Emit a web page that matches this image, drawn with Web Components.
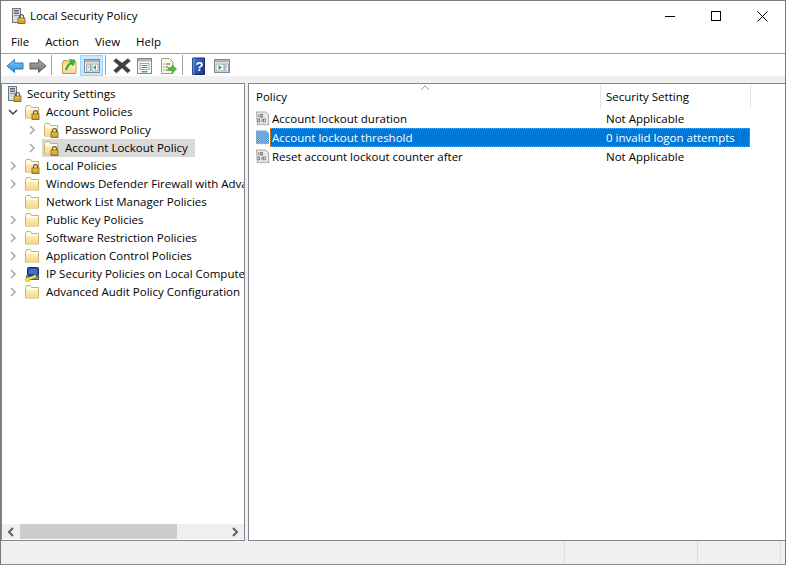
<!DOCTYPE html>
<html><head><meta charset="utf-8"><title>Local Security Policy</title>
<style>
html,body{margin:0;padding:0;height:100%;background:#f0f0f0;overflow:hidden}
body{font:11.5px/16px "Open Sans","Noto Sans",sans-serif;color:#000}
</style></head><body>
<lsp-window>
  <lsp-titlebar slot="title">Local Security Policy</lsp-titlebar>
  <lsp-menubar slot="menu"><lsp-menu>File</lsp-menu><lsp-menu>Action</lsp-menu><lsp-menu>View</lsp-menu><lsp-menu>Help</lsp-menu></lsp-menubar>
  <lsp-toolbar slot="tools"></lsp-toolbar>
  <lsp-tree slot="left">
    <lsp-tree-item level="0" icon="server">Security Settings</lsp-tree-item>
    <lsp-tree-item level="1" icon="lockfolder" chevron="open">Account Policies</lsp-tree-item>
    <lsp-tree-item level="2" icon="lockfolder" chevron="closed">Password Policy</lsp-tree-item>
    <lsp-tree-item level="2" icon="lockfolder" chevron="closed" selected>Account Lockout Policy</lsp-tree-item>
    <lsp-tree-item level="1" icon="lockfolder" chevron="closed">Local Policies</lsp-tree-item>
    <lsp-tree-item level="1" icon="folder" chevron="closed">Windows Defender Firewall with Advanced Security</lsp-tree-item>
    <lsp-tree-item level="1" icon="folder">Network List Manager Policies</lsp-tree-item>
    <lsp-tree-item level="1" icon="folder" chevron="closed">Public Key Policies</lsp-tree-item>
    <lsp-tree-item level="1" icon="folder" chevron="closed">Software Restriction Policies</lsp-tree-item>
    <lsp-tree-item level="1" icon="folder" chevron="closed">Application Control Policies</lsp-tree-item>
    <lsp-tree-item level="1" icon="ipsec" chevron="closed">IP Security Policies on Local Computer</lsp-tree-item>
    <lsp-tree-item level="1" icon="folder" chevron="closed">Advanced Audit Policy Configuration</lsp-tree-item>
  </lsp-tree>
  <lsp-list slot="right">
    <lsp-row setting="Not Applicable">Account lockout duration</lsp-row>
    <lsp-row setting="0 invalid logon attempts" selected>Account lockout threshold</lsp-row>
    <lsp-row setting="Not Applicable">Reset account lockout counter after</lsp-row>
  </lsp-list>
  <lsp-statusbar slot="status"></lsp-statusbar>
</lsp-window>
<script>
const defs=`<defs>
<linearGradient id="fy" x1="0" y1="0" x2="0" y2="1"><stop offset="0" stop-color="#fdeeb8"/><stop offset="1" stop-color="#f5d98e"/></linearGradient>
<linearGradient id="lk" x1="0" y1="0" x2="0" y2="1"><stop offset="0" stop-color="#ecc850"/><stop offset="1" stop-color="#c9951f"/></linearGradient>
<linearGradient id="bl" x1="0" y1="0" x2="0" y2="1"><stop offset="0" stop-color="#8ed2f8"/><stop offset="1" stop-color="#1a86dc"/></linearGradient>
<linearGradient id="gy" x1="0" y1="0" x2="0" y2="1"><stop offset="0" stop-color="#b0b0b0"/><stop offset="1" stop-color="#6e6e6e"/></linearGradient>
<linearGradient id="hb" x1="0" y1="0" x2="1" y2="1"><stop offset="0" stop-color="#4a78d4"/><stop offset="1" stop-color="#16308c"/></linearGradient>
<pattern id="chk" width="2" height="2" patternUnits="userSpaceOnUse"><rect width="2" height="2" fill="#0a6fc8"/><rect width="1" height="1" fill="#cfe3f5"/><rect x="1" y="1" width="1" height="1" fill="#cfe3f5"/></pattern>
</defs>`;
const folder=`<path d="M1.500 3.500v10.500h13V3.500H7.500L6.500 1.500H2.500z" fill="#fffbe6" stroke="#cdb06a"/><rect x="2" y="5.500" width="12" height="8" fill="url(#fy)"/><path d="M2 5h12" stroke="#fff"/>`;
const lock=`<path d="M9.500 10V8.600a2 2 0 0 1 4 0V10" fill="none" stroke="#6b5a2c" stroke-width="1.200"/><rect x="8" y="10" width="7" height="5.500" fill="url(#lk)" stroke="#7c5e14" stroke-width=".8"/>`;
const win=`<rect x="1.500" y="2.500" width="15" height="13" fill="#fff" stroke="#7d8a94"/><rect x="2" y="3" width="14" height="2.500" fill="#a9b5be"/>`;
const digit=(x,y)=>`<rect x="${x}" y="${y}" width="2" height="3" fill="none" stroke="#6d6d6d" stroke-width=".8"/>`;
const one=(x,y)=>`<path d="M${x} ${y}v3" stroke="#6d6d6d" stroke-width="1"/>`;
const I={
folder:[16,folder],
lockfolder:[16,folder+lock],
server:[16,`<rect x="2.500" y=".5" width="8" height="14" fill="#d8dde2" stroke="#6e7680"/><rect x="4" y="2" width="5" height="1.400" fill="#59636e"/><rect x="4" y="4.500" width="5" height="1.400" fill="#59636e"/><rect x="4" y="7" width="5" height="1" fill="#8b95a0"/>`+lock],
ipsec:[16,`<rect x="3.500" y="1.500" width="11" height="8" rx="1" fill="#2c4f9c" stroke="#1c2a50"/><rect x="5" y="3" width="8" height="5" fill="#3f6fc8"/><rect x="2.500" y="10" width="12" height="3.500" fill="#8a8f98" stroke="#33363c" stroke-width=".8"/><path d="M3 14 12 9.500" stroke="#f6e63c" stroke-width="2"/><circle cx="3.500" cy="13.500" r="2.200" fill="#f6e63c" stroke="#8c8420" stroke-width=".5"/>`],
policy:[14,`<path d="M.5 .5h10l3 3v11l-2-1-2 1-2-1-2 1-2-1-2 1z" fill="#e6e6e6" stroke="#a3a3a3"/>`+one(3,3)+digit(5,3)+digit(2,8)+one(6.500,8)+digit(8,8)],
policySel:[14,`<path d="M0 0h11l3 3v12l-2-1-2 1-2-1-2 1-2-1-2 1-2-1z" fill="url(#chk)"/>`],
back:[18,`<path d="M1 9 8.500 2.500V6H17v6H8.500v3.500z" fill="url(#bl)" stroke="#2a78b8"/>`],
forward:[18,`<path d="M17 9 9.500 2.500V6H1v6h8.500v3.500z" fill="url(#gy)" stroke="#5e5e5e"/>`],
up:[18,`<path d="M2.500 5.500v11h13.500V5H8.500L7.500 3.500H3.500z" fill="#f7d98a" stroke="#bd9a4c"/><path d="M3 8h12.500v8H3z" fill="url(#fy)"/><path d="M6 13C7 9 9 7 11.500 6" fill="none" stroke="#38a838" stroke-width="2.200"/><path d="M9 2.500 15 3l-2 6z" fill="#3fb83f" stroke="#218a21" stroke-width=".5"/>`],
showhide:[18,win+`<rect x="3.500" y="7" width="4" height="7" fill="#fff" stroke="#93a0aa"/><path d="M4.500 9h2M4.500 11h2" stroke="#93a0aa"/><rect x="9" y="7" width="6" height="7" fill="#fff" stroke="#93a0aa"/><path d="M13 8v5l-3-2.500z" fill="#2fa84a"/>`],
del:[18,`<path d="M3 1.500 9 6l6-4.500 2.500 2.500L12 8.500l5.500 5-3 2.500L9 11l-5.500 5-3-2.500L6 8.500.500 4z" fill="#3e3e3e" stroke="#777" stroke-width=".6"/>`],
props:[18,`<rect x="1.500" y="1.500" width="14" height="15" fill="#f6f8fa" stroke="#7d8a94"/><rect x="2" y="2" width="13" height="2.500" fill="#aab5bd"/><rect x="4" y="6.500" width="9" height="6" fill="#fff" stroke="#9aa6ae"/><path d="M5.500 8.500h6M5.500 10.500h6" stroke="#6a7680"/><rect x="5.500" y="14" width="6" height="1.500" fill="#2aa3e0"/>`],
exportx:[18,`<path d="M2.500 1.500h8l3.500 3.500v11.500H2.500z" fill="#fdf7df" stroke="#a6a084"/><path d="M4.500 7h1M7 7h4M4.500 10h1M7 10h2M4.500 13h1M7 13h2" stroke="#55524a"/><path d="M9.500 10.500H13V8l4.500 4-4.500 4v-2.500H9.500z" fill="#55b948" stroke="#2f8a2c" stroke-width=".6"/>`],
help:[18,`<path d="M2.500 1h12v16.500h-12z" fill="url(#hb)" stroke="#142a70"/><path d="M2.500 1h2v16.500h-2z" fill="#7a9ae0" opacity=".6"/><text x="9.500" y="14" text-anchor="middle" font-family="Liberation Sans" font-weight="700" font-size="13" fill="#fff">?</text>`],
action:[18,win+`<rect x="3" y="7" width="8" height="7" fill="#fff" stroke="#93a0aa"/><path d="M5.500 8v5l3.500-2.500z" fill="#2fa84a"/><rect x="12" y="7" width="3.500" height="7" fill="#fff" stroke="#93a0aa"/><path d="M12.500 9h2M12.500 11h2" stroke="#93a0aa"/>`]
};
const svg=(n)=>{const [s,b]=I[n];const vb=s===14?15:s,h=s===14?15:s;return `<svg width="${vb}" height="${h}" viewBox="0 0 ${vb} ${h}" xmlns="http://www.w3.org/2000/svg">${defs}${b}</svg>`};
const chev={open:'<svg width="10" height="10" viewBox="0 0 10 10"><path d="M1 3l4 4 4-4" fill="none" stroke="#404040" stroke-width="1.500"/></svg>',
closed:'<svg width="10" height="10" viewBox="0 0 10 10"><path d="M3 1l4 4-4 4" fill="none" stroke="#a6a6a6" stroke-width="1.500"/></svg>'};
class Base extends HTMLElement{
  constructor(){super();this.attachShadow({mode:'open'})}
  set html(h){this.shadowRoot.innerHTML=h}
}
customElements.define('lsp-window',class extends Base{connectedCallback(){this.html=`<style>
:host{display:flex;flex-direction:column;box-sizing:border-box;width:786px;height:565px;border:1px solid #7a7a7a;border-bottom:0;background:#f0f0f0}
.main{flex:1;min-height:0;display:flex;gap:3px;padding:7px 0 0}
.l{display:flex;flex:0 0 244px}.r{display:flex;flex:1;min-width:0}
</style><slot name="title"></slot><slot name="menu"></slot><slot name="tools"></slot>
<div class="main"><div class="l"><slot name="left"></slot></div><div class="r"><slot name="right"></slot></div></div>
<slot name="status"></slot>`}});
customElements.define('lsp-titlebar',class extends Base{connectedCallback(){this.html=`<style>
:host{display:flex;align-items:center;height:30px;background:#fff;flex:none}
.ic{margin:0 4px 0 9px;display:flex}.t{flex:1}
.b{width:46px;height:30px;display:flex;align-items:center;justify-content:center}
</style><span class="ic">${svg('server')}</span><span class="t"><slot></slot></span>
<span class="b"><svg width="10" height="10"><path d="M0 5.500h10" stroke="#000"/></svg></span>
<span class="b"><svg width="10" height="10"><rect x=".5" y=".5" width="9" height="9" fill="none" stroke="#000"/></svg></span>
<span class="b"><svg width="11" height="11"><path d="M.5.500l10 10M10.500.500l-10 10" stroke="#000"/></svg></span>`}});
customElements.define('lsp-menubar',class extends Base{connectedCallback(){this.html=`<style>
:host{display:flex;gap:16px;align-items:center;height:22px;padding-left:10px;background:#fff;border-bottom:1px solid #a0a0a0;flex:none}
</style><slot></slot>`}});
customElements.define('lsp-menu',class extends Base{connectedCallback(){this.html=`<style>:host{display:block}</style><slot></slot>`}});
customElements.define('lsp-toolbar',class extends Base{connectedCallback(){
const b=(n,h)=>`<span class="b${h?' h':''}">${svg(n)}</span>`;
const s=(l,r)=>`<span class="s" style="margin:0 ${r}px 0 ${l}px"></span>`;
this.html=`<style>
:host{display:flex;align-items:center;height:22px;padding-left:2px;background:#fff;flex:none}
.b{box-sizing:border-box;width:23px;height:21px;display:flex;align-items:center;justify-content:center;border:1px solid transparent}
.b svg{margin-top:2px}
.h{background:#cce8ff;border-color:#99d1ff}
.s{width:1px;height:20px;background:#a0a0a0;flex:none}
</style>${b('back')}${b('forward')}${s(2,5)}${b('up')}${b('showhide',1)}${s(2,4)}${b('del')}${b('props')}${b('exportx')}${s(3,4)}${b('help')}${b('action')}`}});
customElements.define('lsp-tree',class extends Base{connectedCallback(){this.html=`<style>
:host{display:flex;flex-direction:column;box-sizing:border-box;width:244px;background:#fff;border:1px solid #82878f;overflow:hidden}
.items{flex:1;min-height:0;padding-top:1px;overflow:hidden}
.bar{flex:none;height:15px;margin-bottom:1px;background:#f0f0f0;display:flex;align-items:center}
.a{width:18px;display:flex;justify-content:center;flex:none}
.track{flex:1;height:100%}.thumb{width:157px;height:100%;background:#cdcdcd}
</style><div class="items"><slot></slot></div>
<div class="bar"><span class="a"><svg width="8" height="10" viewBox="0 0 8 10"><path d="M6 1 2 5l4 4" fill="none" stroke="#606060" stroke-width="2"/></svg></span><div class="track"><div class="thumb"></div></div><span class="a"><svg width="8" height="10" viewBox="0 0 8 10"><path d="M2 1l4 4-4 4" fill="none" stroke="#606060" stroke-width="2"/></svg></span></div>`}});
customElements.define('lsp-tree-item',class extends Base{connectedCallback(){
const lv=+this.getAttribute('level'),ch=this.getAttribute('chevron'),sel=this.hasAttribute('selected');
const pad=lv===0?4:lv===1?6:25;
this.html=`<style>
:host{display:flex;align-items:center;height:18px;white-space:nowrap;padding-left:${pad}px}
.c{width:10px;height:18px;display:flex;align-items:center;justify-content:center;margin-right:${lv===0?-10:6}px;flex:none}
.w{display:flex;align-items:center;height:18px;padding-right:${sel?7:4}px;${sel?'background:#d9d9d9;margin-left:-1px;':''}}
.i{display:flex;margin:0 ${lv===0?5:6}px 0 ${sel?1:0}px;flex:none}
</style><span class="c">${ch?chev[ch]:''}</span><span class="w"><span class="i">${svg(this.getAttribute('icon'))}</span><span><slot></slot></span></span>`}});
customElements.define('lsp-list',class extends Base{connectedCallback(){this.html=`<style>
:host{display:block;flex:1;box-sizing:border-box;background:#fff;border:1px solid #82878f;border-right:0;overflow:hidden;min-width:0}
.h{display:flex;height:25px;position:relative}
.c{box-sizing:border-box;display:flex;align-items:center;border-right:1px solid #e5e5e5;padding:1px 0 0 7px}
.c1{width:352px}.c2{width:150px;padding-left:5px}
.sort{position:absolute;left:171px;top:1px}
</style><div class="h"><div class="c c1">Policy</div><div class="c c2">Security Setting</div>
<svg class="sort" width="10" height="6"><path d="M1 5l4-4 4 4" fill="none" stroke="#9a9a9a"/></svg></div><slot></slot>`}});
customElements.define('lsp-row',class extends Base{connectedCallback(){
const sel=this.hasAttribute('selected');
this.html=`<style>
:host{display:flex;align-items:center;height:19px;padding-left:7px;white-space:nowrap}
.i{display:flex;flex:none;width:14px}
.w{box-sizing:border-box;display:flex;align-items:center;width:480px;height:19px;padding-left:2px;${sel?'background:#0078d7;color:#fff;border:1px dotted #f08a24;padding-left:1px;':''}}
.a{width:334px}
</style><span class="i">${svg(sel?'policySel':'policy')}</span><span class="w"><span class="a"><slot></slot></span><span>${this.getAttribute('setting')}</span></span>`}});
customElements.define('lsp-statusbar',class extends Base{connectedCallback(){this.html=`<style>
:host{display:flex;height:24px;flex:none;background:#f0f0f0;box-sizing:border-box;border-bottom:1px solid #8a8a8a}
span{display:block;box-sizing:border-box;height:100%;border-right:1px solid #dcdcdc}
</style><span style="width:564px"></span><span style="width:133px"></span><span style="width:83px"></span>`}});
</script>
</body></html>
